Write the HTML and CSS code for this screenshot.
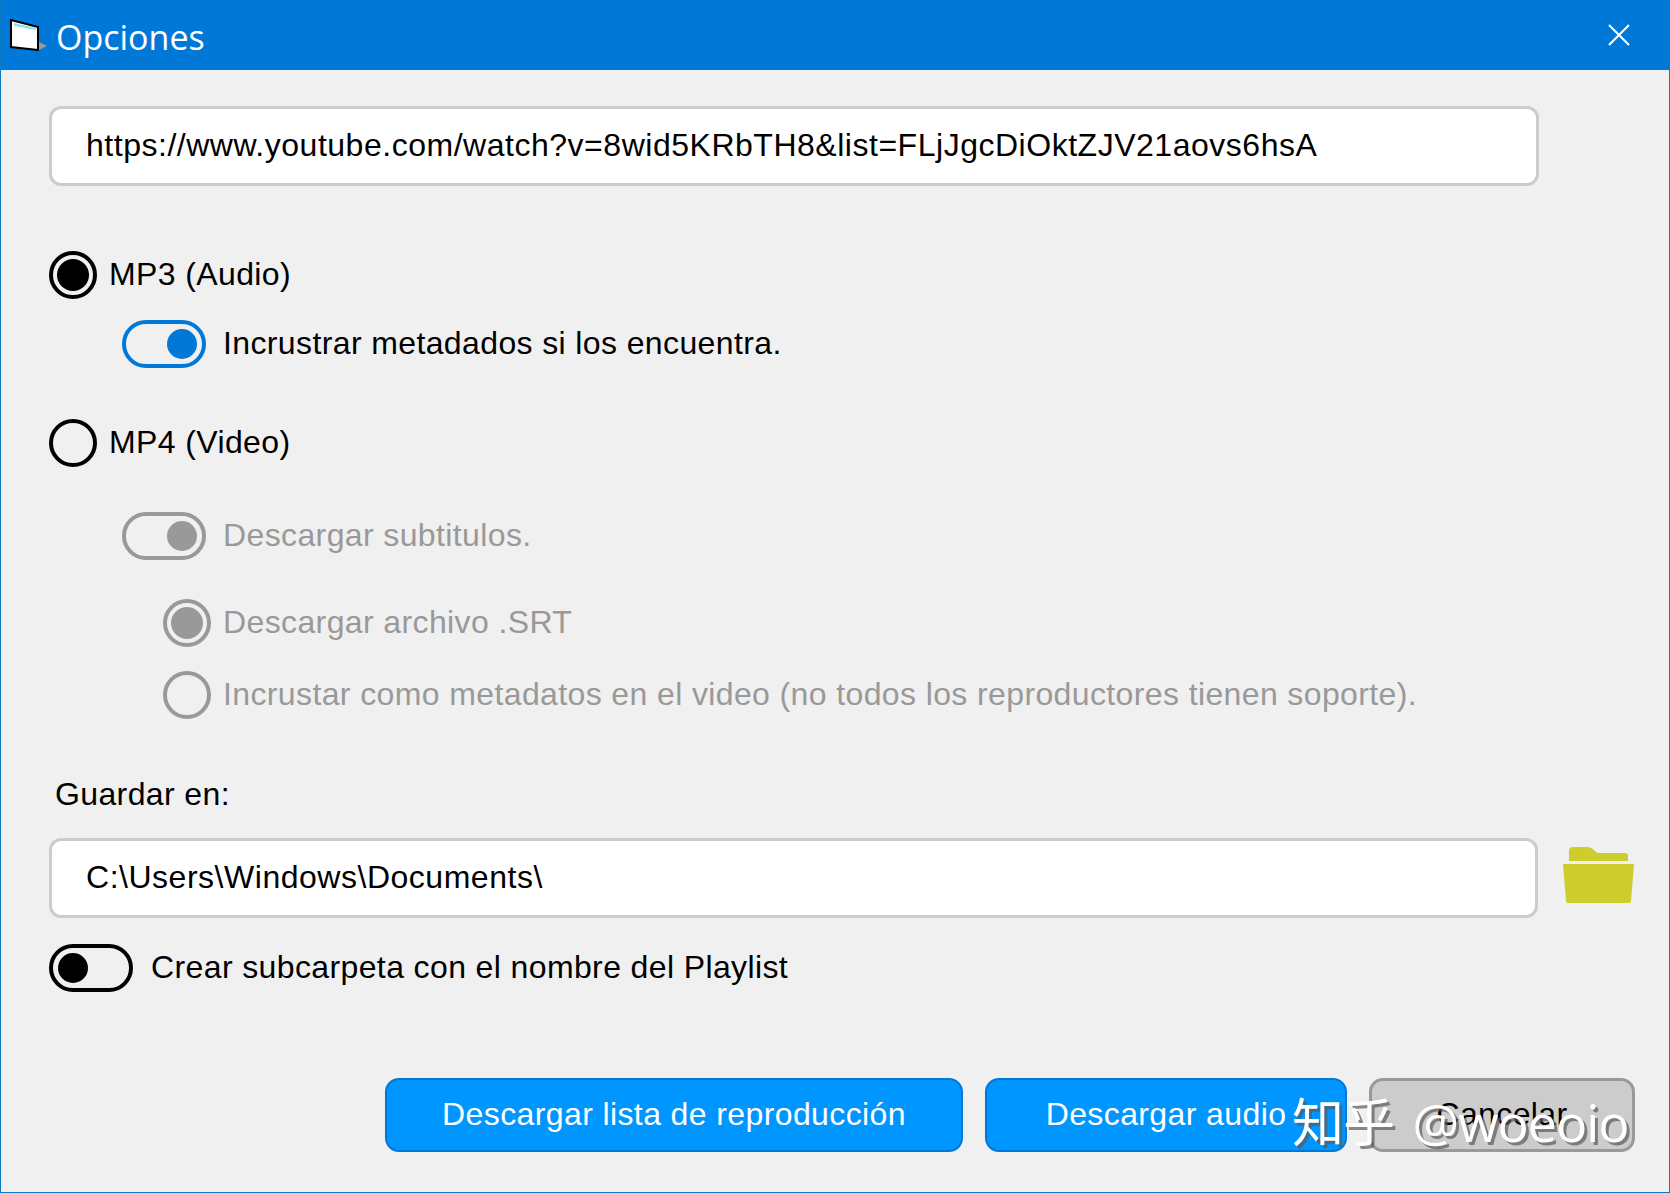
FILE: index.html
```html
<!DOCTYPE html>
<html lang="en">

<head>
  <meta charset="UTF-8" />
  <meta name="viewport" content="width=device-width, initial-scale=1.0" />
  <title>Opciones</title>
  <link rel="stylesheet" href="styles.css">
</head>

<body>
  <div class="window">

    <div class="title-bar">
      <svg class="window-icon" width="38" height="32" viewBox="0 0 38 32">
        <path d="M1 1 L28 8 L28 31 L1 28 Z" fill="#fff" stroke="#000" stroke-width="2" />
        <path d="M4 4 L26 9 L26 11 L4 7 Z" fill="#8fe3e6" />
        <path d="M29 23 L37 27 L29 31 Z" fill="#9a9a9a" />
      </svg>
      <span class="title-text">Opciones</span>
      <svg class="close-icon" width="22" height="22" viewBox="0 0 22 22">
        <path d="M1 1 L21 21 M21 1 L1 21" stroke="#fff" stroke-width="2" fill="none" />
      </svg>
    </div>

    <div class="content">
      <div class="text-box url-box">https://www.youtube.com/watch?v=8wid5KRbTH8&amp;list=FLjJgcDiOktZJV21aovs6hsA</div>

      <div class="option mp3-option">
        <span class="radio radio-on"></span>
        <span class="label">MP3 (Audio)</span>
      </div>
      <div class="option sub-option metadata-option">
        <span class="switch switch-on switch-blue"></span>
        <span class="label">Incrustrar metadados si los encuentra.</span>
      </div>

      <div class="option mp4-option">
        <span class="radio"></span>
        <span class="label">MP4 (Video)</span>
      </div>

      <div class="disabled">
        <div class="option sub-option subtitle-option">
          <span class="switch switch-on"></span>
          <span class="label">Descargar subtitulos.</span>
        </div>
        <div class="option nested-option srt-option">
          <span class="radio radio-on"></span>
          <span class="label">Descargar archivo .SRT</span>
        </div>
        <div class="option nested-option embed-option">
          <span class="radio"></span>
          <span class="label">Incrustar como metadatos en el video (no todos los reproductores tienen soporte).</span>
        </div>
      </div>

      <p class="save-label">Guardar en:</p>
      <div class="path-row">
        <div class="text-box">C:\Users\Windows\Documents\</div>
        <svg class="folder-icon" width="71" height="56" viewBox="0 0 71 56">
          <path d="M6 14 L6 4 Q6 0 10 0 L24 0 Q28 0 31 3 L33 5 Q34 6 37 6 L62 6 Q65 6 65 9 L65 14 Z" fill="#cdcd2d" />
          <path d="M0 17 L71 17 L68 54 Q68 56 66 56 L5 56 Q3 56 3 54 Z" fill="#cdcd2d" />
        </svg>
      </div>
      <div class="option playlist-option">
        <span class="switch"></span>
        <span class="label">Crear subcarpeta con el nombre del Playlist</span>
      </div>

      <div class="button-row">
        <button class="btn btn-blue btn-playlist">Descargar lista de reproducción</button>
        <button class="btn btn-blue btn-audio">Descargar audio</button>
        <button class="btn btn-gray btn-cancel">Cancelar</button>
      </div>
    </div>

    <div class="watermark">知乎 @woeoio</div>
  </div>
</body>

</html>
```

FILE: styles.css
```css
/* Base Reset */
* {
  margin: 0;
  padding: 0;
  box-sizing: border-box;
}

body {
  background-color: #f0f0f0;
  font-family: 'Liberation Sans', Arial, sans-serif;
  font-size: 32px;
  color: #000;
}

.window {
  position: relative;
  width: 1670px;
  height: 1193px;
  border: 1px solid #0e7ac4;
  border-top: none;
  overflow: hidden;
}

/* Title Bar */
.title-bar {
  display: flex;
  align-items: center;
  height: 70px;
  margin: 0 -1px;
  padding: 0 40px 0 10px;
  background-color: #0078d7;
  color: #fff;
}

.window-icon {
  margin-right: 8px;
}

.title-text {
  flex: 1;
  padding-top: 4px;
  font-family: 'Open Sans', sans-serif;
  font-size: 34px;
}

/* Main Content */
.content {
  padding: 36px 34px 0 48px;
}

.text-box {
  flex: 1;
  display: flex;
  align-items: center;
  height: 80px;
  padding: 0 0 2px 34px;
  background-color: #fff;
  border: 3px solid #ccc;
  border-radius: 12px;
  letter-spacing: 0.52px;
}

.url-box {
  width: 1490px;
}

.option {
  display: flex;
  align-items: center;
  gap: 12px;
}

.label {
  padding-bottom: 2px;
  letter-spacing: 0.38px;
}

.sub-option {
  margin-left: 73px;
  gap: 17px;
}

.nested-option {
  margin-left: 114px;
}

.mp3-option {
  margin-top: 65px;
}

.metadata-option {
  margin-top: 21px;
}

.mp4-option {
  margin-top: 51px;
}

.subtitle-option {
  margin-top: 45px;
}

.srt-option {
  margin-top: 39px;
}

.embed-option {
  margin-top: 24px;
}

.playlist-option {
  margin-top: 26px;
  gap: 18px;
}

/* Radios and Switches */
.radio {
  flex: none;
  position: relative;
  width: 48px;
  height: 48px;
  border: 4px solid #000;
  border-radius: 50%;
}

.radio-on::after {
  content: '';
  position: absolute;
  top: 4px;
  left: 4px;
  width: 32px;
  height: 32px;
  background-color: #000;
  border-radius: 50%;
}

.switch {
  flex: none;
  position: relative;
  width: 84px;
  height: 48px;
  border: 4px solid #000;
  border-radius: 24px;
}

.switch::after {
  content: '';
  position: absolute;
  top: 5px;
  left: 5px;
  width: 30px;
  height: 30px;
  background-color: #000;
  border-radius: 50%;
}

.switch-on::after {
  left: auto;
  right: 5px;
}

.switch-blue {
  border-color: #0078d7;
}

.switch-blue::after {
  background-color: #0078d7;
}

/* Disabled Group */
.disabled {
  color: #999;
}

.disabled .radio,
.disabled .switch {
  border-color: #999;
}

.disabled .radio::after,
.disabled .switch::after {
  background-color: #999;
}

/* Save Path */
.save-label {
  margin: 56px 0 0 6px;
  line-height: 38px;
  letter-spacing: 0.38px;
}

.path-row {
  display: flex;
  align-items: center;
  gap: 25px;
  margin-top: 25px;
}

.folder-icon {
  flex: none;
  margin: 0 1px 6px 0;
}

/* Bottom Buttons */
.button-row {
  display: flex;
  justify-content: flex-end;
  gap: 22px;
  margin-top: 86px;
}

.btn {
  height: 74px;
  padding-bottom: 2px;
  border-radius: 14px;
  border: 2px solid;
  font-family: inherit;
  font-size: 32px;
  letter-spacing: 0.39px;
}

.btn-blue {
  background-color: #0096ff;
  border-color: #0078d7;
  color: #fff;
}

.btn-gray {
  background-color: #ccc;
  border-color: #999;
  border-width: 3px;
  color: #000;
}

.btn-playlist {
  width: 578px;
}

.btn-audio {
  width: 362px;
}

.btn-cancel {
  width: 266px;
}

/* Watermark */
.watermark {
  position: absolute;
  left: 1291px;
  top: 1090px;
  font-family: 'Open Sans', 'Noto Sans CJK SC', sans-serif;
  font-size: 52px;
  line-height: 64px;
  letter-spacing: -1px;
  word-spacing: 6px;
  white-space: nowrap;
  color: #fff;
  text-shadow: 3px 3px 0 rgba(90, 90, 90, 0.7);
}
```
